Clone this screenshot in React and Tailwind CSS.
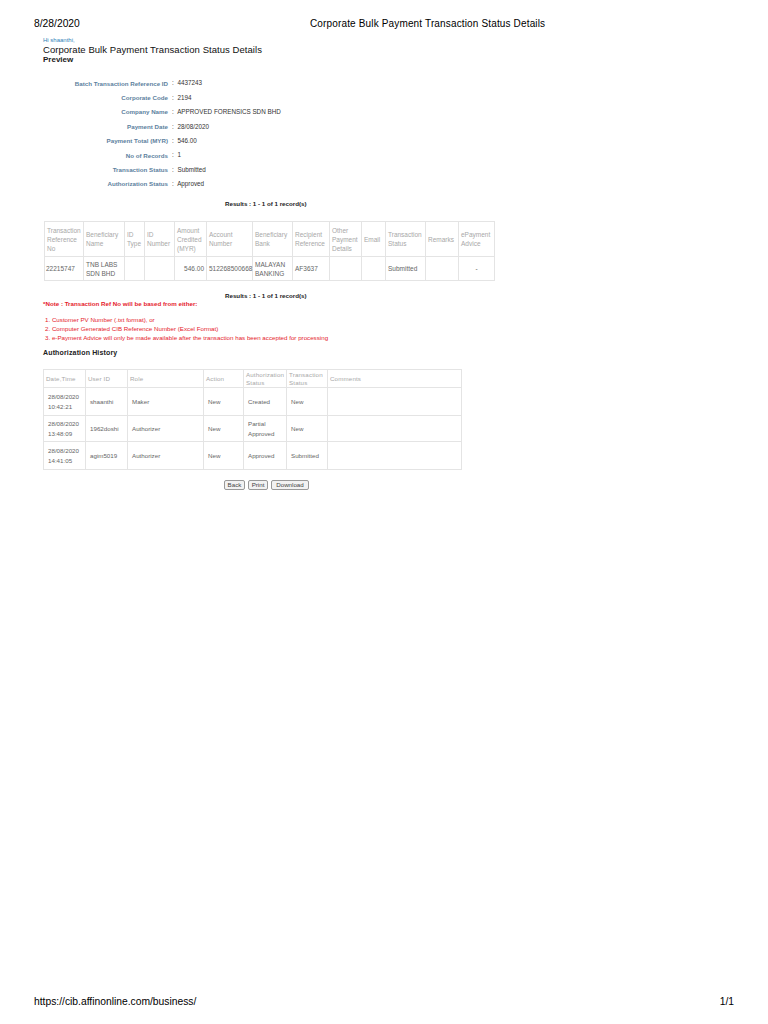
import React from "react";

const summary = [
  ["Batch Transaction Reference ID", "4437243"],
  ["Corporate Code", "2194"],
  ["Company Name", "APPROVED FORENSICS SDN BHD"],
  ["Payment Date", "28/08/2020"],
  ["Payment Total (MYR)", "546.00"],
  ["No of Records", "1"],
  ["Transaction Status", "Submitted"],
  ["Authorization Status", "Approved"],
];

const paymentHead = [
  ["Transaction Reference No", "w-[39px]"],
  ["Beneficiary Name", "w-[41px]"],
  ["ID Type", "w-[20px]"],
  ["ID Number", "w-[30px]"],
  ["Amount Credited (MYR)", "w-[32px]"],
  ["Account Number", "w-[46px]"],
  ["Beneficiary Bank", "w-[40px]"],
  ["Recipient Reference", "w-[37px]"],
  ["Other Payment Details", "w-[32px]"],
  ["Email", "w-[24px]"],
  ["Transaction Status", "w-[40px]"],
  ["Remarks", "w-[33px]"],
  ["ePayment Advice", "w-[36px]"],
];

const historyHead = [
  ["Date,Time", "w-[42px]"],
  ["User ID", "w-[42px]"],
  ["Role", "w-[76px]"],
  ["Action", "w-[40px]"],
  ["Authorization Status", "w-[43px]"],
  ["Transaction Status", "w-[41px]"],
  ["Comments", "w-[134px]"],
];

const history = [
  { time: ["28/08/2020", "10:42:21"], user: "shaanthi", role: "Maker", action: "New", auth: "Created", status: "New", height: "h-[28px]" },
  { time: ["28/08/2020", "13:48:09"], user: "1962doshi", role: "Authorizer", action: "New", auth: "Partial Approved", status: "New", height: "h-[26px]" },
  { time: ["28/08/2020", "14:41:05"], user: "agim5019", role: "Authorizer", action: "New", auth: "Approved", status: "Submitted", height: "h-[28px]" },
];

const headCell = "border border-[#e4e4e4] px-[2px] py-0 text-left align-middle font-normal text-[#a8a8a8]";
const bodyCell = "border border-[#e4e4e4] px-[2px] py-0 align-middle font-normal text-[#666666]";
const button = "h-[10px] rounded-[2px] border border-[#999999] bg-[#f2f2f2] text-[6.2px] leading-[8px] text-[#444444]";

function Results() {
  return <p className="ml-[182px] text-[6.2px] font-bold leading-[8px] text-[#222222]">Results : 1 - 1 of 1 record(s)</p>;
}

export default function App() {
  return (
    <div className="flex h-[1024px] w-[768px] flex-col bg-white font-['Liberation_Sans',Arial,sans-serif] text-black">
      <header className="mt-[9px] flex h-[17px] items-center pl-[34px] pt-[12px] text-[10.3px] leading-[12px]">
        <span className="w-[276px]">8/28/2020</span>
        <span className="text-[10px] tracking-[0.15px]">Corporate Bulk Payment Transaction Status Details</span>
      </header>

      <main className="flex-1 pl-[43px] pt-[11px]">
        <p className="text-[6px] leading-[7px] text-[#2f7fb8]">Hi shaanthi,</p>
        <h1 className="text-[9.5px] font-normal leading-[12px] tracking-[0.05px] text-[#111111]">Corporate Bulk Payment Transaction Status Details</h1>
        <h2 className="text-[8px] font-bold leading-[8px] text-[#222222]">Preview</h2>

        <dl className="mt-[12px] flex flex-col">
          {summary.map(([label, value]) => (
            <div key={label} className="flex h-[14.4px] items-center">
              <dt className="w-[125px] text-right text-[6.2px] font-bold text-[#5d7f9e]">{label}</dt>
              <dd className="ml-[4px] text-[6.3px] text-[#333333]">
                <span className="mr-[2px]">:</span> {value}
              </dd>
            </div>
          ))}
        </dl>

        <div className="mt-[9px]">
          <Results />
        </div>

        <table className="mt-[13px] ml-[1px] w-[449px] table-fixed border-collapse text-[6.5px] leading-[9px]">
          <thead>
            <tr className="h-[35px]">
              {paymentHead.map(([title, width]) => (
                <th key={title} className={`${headCell} ${width}`}>{title}</th>
              ))}
            </tr>
          </thead>
          <tbody>
            <tr className="h-[24px]">
              <td className={`${bodyCell} pl-[1px]`}>22215747</td>
              <td className={bodyCell}>TNB LABS SDN BHD</td>
              <td className={bodyCell}></td>
              <td className={bodyCell}></td>
              <td className={`${bodyCell} text-right`}>546.00</td>
              <td className={`${bodyCell} whitespace-nowrap`}>512268500668</td>
              <td className={bodyCell}>MALAYAN BANKING</td>
              <td className={bodyCell}>AF3637</td>
              <td className={bodyCell}></td>
              <td className={bodyCell}></td>
              <td className={bodyCell}>Submitted</td>
              <td className={bodyCell}></td>
              <td className={`${bodyCell} text-center`}>-</td>
            </tr>
          </tbody>
        </table>

        <div className="mt-[11px]">
          <Results />
        </div>

        <p className="text-[6.2px] font-bold leading-[8px] text-[#e5212b]">*Note : Transaction Ref No will be based from either:</p>
        <ol className="mt-[7px] ml-[2px] text-[6.2px] leading-[9px] text-[#e5212b]">
          <li>1. Customer PV Number (.txt format), or</li>
          <li>2. Computer Generated CIB Reference Number (Excel Format)</li>
          <li>3. e-Payment Advice will only be made available after the transaction has been accepted for processing</li>
        </ol>

        <h3 className="mt-[7px] text-[7px] font-bold leading-[8px] tracking-[0.15px] text-[#222222]">Authorization History</h3>

        <table className="mt-[12px] w-[418px] table-fixed border-collapse text-[6.2px] leading-[8px] tracking-[0.15px]">
          <thead>
            <tr className="h-[18px]">
              {historyHead.map(([title, width]) => (
                <th key={title} className={`${headCell} ${width}`}>{title}</th>
              ))}
            </tr>
          </thead>
          <tbody>
            {history.map((row) => (
              <tr key={row.user} className={`${row.height} leading-[10px] tracking-normal`}>
                <td className={`${bodyCell} pl-[4px]`}>
                  {row.time[0]}
                  <br />
                  {row.time[1]}
                </td>
                <td className={`${bodyCell} pl-[4px]`}>{row.user}</td>
                <td className={`${bodyCell} pl-[4px]`}>{row.role}</td>
                <td className={`${bodyCell} pl-[4px]`}>{row.action}</td>
                <td className={`${bodyCell} pl-[4px]`}>{row.auth}</td>
                <td className={`${bodyCell} pl-[4px]`}>{row.status}</td>
                <td className={bodyCell}></td>
              </tr>
            ))}
          </tbody>
        </table>

        <div className="mt-[10px] ml-[181px] flex gap-[3px]">
          <button className={`${button} w-[21px]`}>Back</button>
          <button className={`${button} w-[20px]`}>Print</button>
          <button className={`${button} w-[38px]`}>Download</button>
        </div>
      </main>

      <footer className="flex items-center justify-between pb-[16px] pl-[34px] pr-[34px] text-[10.3px] leading-[12px]">
        <span>https://cib.affinonline.com/business/</span>
        <span>1/1</span>
      </footer>
    </div>
  );
}
